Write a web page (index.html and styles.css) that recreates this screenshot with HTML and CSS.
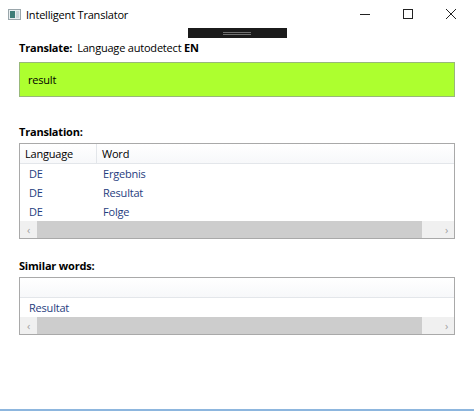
FILE: index.html
```html
<!DOCTYPE html>
<html lang="en">
<head>
    <meta charset="UTF-8">
    <title>Intelligent Translator</title>
    <link rel="stylesheet" href="styles.css">
</head>
<body>
    <div class="window">
        <header class="titlebar">
            <svg class="app-icon" width="13" height="11" viewBox="0 0 13 11">
                <rect x="0.5" y="0.5" width="12" height="10" fill="#e8eef0" stroke="#9aa6ab"/>
                <rect x="2" y="2" width="5" height="7" fill="#3e7d78"/>
                <rect x="8" y="2" width="3" height="7" fill="#c9d6da"/>
            </svg>
            <span class="title">Intelligent Translator</span>
            <div class="controls">
                <span class="ctl">
                    <svg width="10" height="10" viewBox="0 0 10 10"><path d="M0 5.5h10" stroke="#222" stroke-width="1"/></svg>
                </span>
                <span class="ctl">
                    <svg width="10" height="10" viewBox="0 0 10 10"><rect x="0.5" y="0.5" width="9" height="9" fill="none" stroke="#222"/></svg>
                </span>
                <span class="ctl">
                    <svg width="10" height="10" viewBox="0 0 10 10"><path d="M0 0L10 10M10 0L0 10" stroke="#222" stroke-width="1"/></svg>
                </span>
            </div>
        </header>

        <div class="handle"><span class="grip"></span></div>

        <main class="content">
            <div class="translate-row">
                <b>Translate:</b>
                <span class="detect">Language autodetect <b>EN</b></span>
            </div>

            <div class="input-box">result</div>

            <h3 class="label label-first">Translation:</h3>
            <div class="listview">
                <div class="lv-header">
                    <span class="col-lang">Language</span>
                    <span class="col-word">Word</span>
                </div>
                <div class="lv-body">
                    <div class="lv-row"><span class="col-lang">DE</span><span class="col-word">Ergebnis</span></div>
                    <div class="lv-row"><span class="col-lang">DE</span><span class="col-word">Resultat</span></div>
                    <div class="lv-row"><span class="col-lang">DE</span><span class="col-word">Folge</span></div>
                </div>
                <div class="hscroll">
                    <span class="arrow">&lsaquo;</span>
                    <span class="thumb"></span>
                    <span class="arrow arrow-right">&rsaquo;</span>
                </div>
            </div>

            <h3 class="label">Similar words:</h3>
            <div class="listview">
                <div class="lv-header"></div>
                <div class="lv-body">
                    <div class="lv-row"><span class="col-single">Resultat</span></div>
                </div>
                <div class="hscroll">
                    <span class="arrow">&lsaquo;</span>
                    <span class="thumb"></span>
                    <span class="arrow arrow-right">&rsaquo;</span>
                </div>
            </div>
        </main>
    </div>
</body>
</html>
```

FILE: styles.css
```css
:root {
    --list-blue: #1f3d80;
    --border-grey: #a9a9a9;
    --scroll-grey: #cdcdcd;
}

* {
    box-sizing: border-box;
    margin: 0;
    padding: 0;
}

body {
    font-family: 'Open Sans', 'Noto Sans', Arial, sans-serif;
    font-size: 11px;
    letter-spacing: -0.2px;
    color: #000;
    background: #fff;
}

.window {
    width: 474px;
    height: 411px;
    display: flex;
    flex-direction: column;
    border-bottom: 2px solid #8db6de;
}

.titlebar {
    height: 28px;
    display: flex;
    align-items: center;
    padding-left: 8px;
}

.app-icon {
    margin-right: 5px;
}

.controls {
    margin-left: auto;
    display: flex;
    height: 100%;
    padding-right: 2px;
}

.ctl {
    width: 43px;
    display: flex;
    align-items: center;
    justify-content: center;
    margin-top: -1px;
}

.handle {
    width: 99px;
    height: 10px;
    margin: 0 auto;
    background: #1b1b1b;
    display: flex;
    align-items: center;
    justify-content: center;
}

.grip {
    width: 28px;
    height: 3px;
    border-top: 1px solid #707070;
    border-bottom: 1px solid #707070;
}

.content {
    padding: 0 19px;
    flex: 1;
}

.translate-row {
    margin-top: 1px;
    height: 16px;
    display: flex;
    align-items: center;
    gap: 5px;
}

.translate-row b {
    font-weight: 700;
}

.input-box {
    margin-top: 7px;
    height: 35px;
    background: #adff2f;
    border: 1px solid #98b87a;
    padding-left: 8px;
    display: flex;
    align-items: center;
}

.label {
    font-size: 11px;
    font-weight: 700;
    height: 16px;
    line-height: 16px;
    margin-top: 19px;
    margin-bottom: 3px;
}

.label-first {
    margin-top: 27px;
}

.listview {
    border: 1px solid var(--border-grey);
}

.lv-header {
    height: 20px;
    display: flex;
    align-items: center;
    background: linear-gradient(#fff, #f7f8fa);
    border-bottom: 1px solid #e3e6ea;
}

.lv-header .col-lang {
    width: 77px;
    padding-left: 5px;
    border-right: 1px solid #e3e6ea;
    height: 100%;
    display: flex;
    align-items: center;
}

.lv-header .col-word {
    padding-left: 5px;
}

.lv-row {
    height: 19px;
    display: flex;
    align-items: center;
    color: var(--list-blue);
}

.lv-body .col-lang {
    width: 83px;
    padding-left: 9px;
}

.lv-body .col-single {
    padding-left: 9px;
}

.hscroll {
    height: 17px;
    display: flex;
    background: #f0f0f0;
}

.arrow {
    width: 17px;
    display: flex;
    align-items: center;
    justify-content: center;
    color: #a0a0a0;
    font-size: 11px;
}

.arrow-right {
    width: 32px;
    justify-content: flex-end;
    padding-right: 6px;
}

.thumb {
    flex: 1;
    background: var(--scroll-grey);
}
```
